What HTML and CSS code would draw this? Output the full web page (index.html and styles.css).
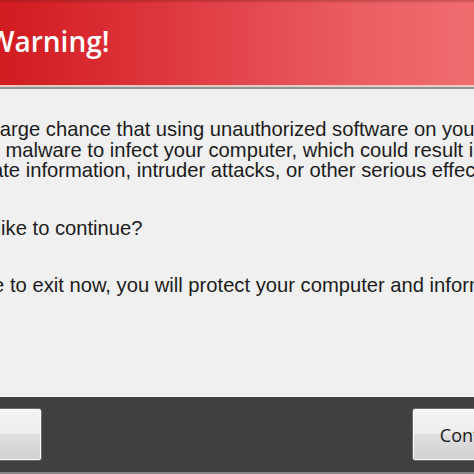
FILE: index.html
```html
<!DOCTYPE html>
<html lang="en">
<head>
  <meta charset="UTF-8">
  <meta name="viewport" content="width=device-width, initial-scale=1.0">
  <title>Warning</title>
  <link rel="stylesheet" href="styles.css">
</head>
<body>
  <div class="dialog">
    <div class="titleBar">
      <h1>Warning!</h1>
    </div>
    <div class="message">
      <p>
        There is a large chance that using unauthorized software on your<br>
        PC permits malware to infect your computer, which could result in<br>
        stolen private information, intruder attacks, or other serious effects.
      </p>
      <p class="question">Would you like to continue?</p>
      <p>If you move to exit now, you will protect your computer and information.</p>
    </div>
    <div class="buttonBar">
      <button id="exit">Exit</button>
      <button id="continue">Continue</button>
    </div>
  </div>
</body>
</html>
```

FILE: styles.css
```css
html, body {
  margin: 0;
  height: 100%;
  overflow: hidden;
  background: #f0f0f0;
}

.dialog {
  width: 680px;
  margin-left: -110px;
}

.titleBar {
  height: 87px;
  box-sizing: border-box;
  padding: 21px 0 0 98px;
  background: linear-gradient(to right, #cf191c 0%, #d21e22 18%, #d92d33 32%, #e2444a 50%, #e95a5e 66%, #ef6a6c 82%, #f47676 100%);
  box-shadow: inset 0 2px 2px rgba(90, 20, 20, 0.25);
  border-bottom: 2px solid #eccabe;
}

h1 {
  margin: 0;
  font-family: "Open Sans", sans-serif;
  font-weight: 600;
  font-size: 28px;
  line-height: 40px;
  color: #fff;
}

.message {
  height: 309px;
  box-sizing: border-box;
  padding: 30px 0 0 10px;
  border-top: 2px solid #8d969e;
  font-family: "Liberation Sans", Arial, sans-serif;
  font-size: 20.2px;
  line-height: 20.5px;
  color: #1c1c1c;
  white-space: nowrap;
}

.message p {
  margin: 0 0 37px;
}

.message .question {
  text-indent: -4px;
}

.buttonBar {
  display: flex;
  justify-content: space-between;
  padding: 11px 26px 11px 32px;
  background: #404040;
  border-top: 1px solid #f6f6f6;
  border-bottom: 2px solid #878787;
}

button {
  height: 53px;
  width: 120px;
  border: 1px solid #6c6c6c;
  border-radius: 3px;
  background: linear-gradient(#f4f4f4 0%, #ececec 48%, #dedede 50%, #d2d2d2 100%);
  box-shadow: inset 0 0 0 1px #fbfbfb;
  font-family: "Open Sans", sans-serif;
  font-size: 18px;
  color: #1a1a1a;
  cursor: pointer;
}

#continue {
  width: 132px;
}
```
